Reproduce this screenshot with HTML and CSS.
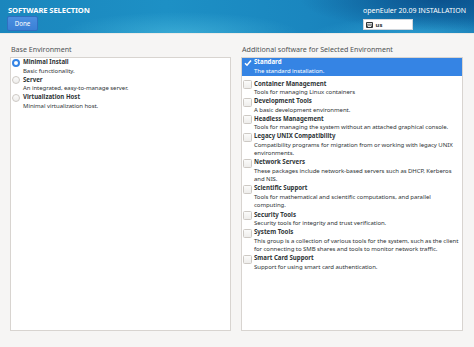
FILE: index.html
```html
<!DOCTYPE html>
<html>
<head>
<meta charset="utf-8">
<link rel="stylesheet" href="styles.css">
</head>
<body>
<header class="top">
  <div class="top-left">
    <div class="title">SOFTWARE SELECTION</div>
    <button class="done">Done</button>
  </div>
  <div class="top-right">
    <div class="product">openEuler 20.09 INSTALLATION</div>
    <div class="kbd">
      <svg class="kbd-icon" width="7" height="6" viewBox="0 0 7 6"><rect x="0" y="0" width="7" height="6" rx="1" fill="#2e3436"/><rect x="1" y="1.2" width="5" height="0.9" fill="#fff"/><rect x="1" y="2.6" width="5" height="0.9" fill="#fff"/><rect x="1.8" y="4" width="3.4" height="0.9" fill="#fff"/></svg>
      <span class="kbd-text">us</span>
    </div>
  </div>
</header>
<main class="main">
  <section class="col">
    <div class="label">Base Environment</div>
    <div class="box">
      <div class="row">
        <span class="radio on"></span>
        <div class="txt"><div class="t">Minimal Install</div><div class="d">Basic functionality.</div></div>
      </div>
      <div class="row">
        <span class="radio"></span>
        <div class="txt"><div class="t">Server</div><div class="d">An integrated, easy-to-manage server.</div></div>
      </div>
      <div class="row">
        <span class="radio"></span>
        <div class="txt"><div class="t">Virtualization Host</div><div class="d">Minimal virtualization host.</div></div>
      </div>
    </div>
  </section>
  <section class="col">
    <div class="label">Additional software for Selected Environment</div>
    <div class="box">
      <div class="row sel">
        <span class="check on"><svg width="8" height="8" viewBox="0 0 8 8"><path d="M1 4.2 L3 6.2 L7 1.6" fill="none" stroke="#fff" stroke-width="1.6"/></svg></span>
        <div class="txt"><div class="t">Standard</div><div class="d">The standard installation.</div></div>
      </div>
      <div class="row">
        <span class="check"></span>
        <div class="txt"><div class="t">Container Management</div><div class="d">Tools for managing Linux containers</div></div>
      </div>
      <div class="row">
        <span class="check"></span>
        <div class="txt"><div class="t">Development Tools</div><div class="d">A basic development environment.</div></div>
      </div>
      <div class="row">
        <span class="check"></span>
        <div class="txt"><div class="t">Headless Management</div><div class="d">Tools for managing the system without an attached graphical console.</div></div>
      </div>
      <div class="row">
        <span class="check"></span>
        <div class="txt"><div class="t">Legacy UNIX Compatibility</div><div class="d">Compatibility programs for migration from or working with legacy UNIX environments.</div></div>
      </div>
      <div class="row">
        <span class="check"></span>
        <div class="txt"><div class="t">Network Servers</div><div class="d">These packages include network-based servers such as DHCP, Kerberos and NIS.</div></div>
      </div>
      <div class="row">
        <span class="check"></span>
        <div class="txt"><div class="t">Scientific Support</div><div class="d">Tools for mathematical and scientific computations, and parallel computing.</div></div>
      </div>
      <div class="row">
        <span class="check"></span>
        <div class="txt"><div class="t">Security Tools</div><div class="d">Security tools for integrity and trust verification.</div></div>
      </div>
      <div class="row">
        <span class="check"></span>
        <div class="txt"><div class="t">System Tools</div><div class="d">This group is a collection of various tools for the system, such as the client for connecting to SMB shares and tools to monitor network traffic.</div></div>
      </div>
      <div class="row">
        <span class="check"></span>
        <div class="txt"><div class="t">Smart Card Support</div><div class="d">Support for using smart card authentication.</div></div>
      </div>
    </div>
  </section>
</main>
</body>
</html>
```
FILE: styles.css
```css
* { box-sizing: border-box; }
html, body { margin: 0; padding: 0; }
body {
  width: 474px;
  height: 347px;
  overflow: hidden;
  background: #f6f5f4;
  font-family: "Noto Sans", "Open Sans", sans-serif;
  color: #2e3436;
}
.top {
  height: 34px;
  display: flex;
  justify-content: space-between;
  padding: 5px 8px 0 7px;
  background:
    radial-gradient(ellipse 140px 30px at 440px 0px, rgba(8,70,130,0.75), rgba(8,70,130,0) 100%),
    radial-gradient(ellipse 120px 22px at 180px 34px, rgba(90,200,230,0.45), rgba(90,200,230,0) 100%),
    radial-gradient(ellipse 110px 20px at 420px 36px, rgba(60,180,225,0.6), rgba(60,180,225,0) 100%),
    linear-gradient(90deg, #1b86bd 0%, #1d90c5 35%, #1a86bf 65%, #1372ad 100%);
  border-bottom: 1px solid #eceae6;
}
.top-left { display: flex; flex-direction: column; align-items: flex-start; }
.title {
  color: #fff;
  font-weight: 700;
  font-size: 7.6px;
  line-height: 10px;
  padding-left: 1px;
  letter-spacing: -0.1px;
}
.done {
  margin-top: 1px;
  width: 31px;
  height: 15px;
  padding: 0;
  border: 1px solid #2f6fc0;
  border-radius: 2px;
  background: linear-gradient(#4a8fe0, #3b80d6);
  color: #fff;
  font-family: inherit;
  font-size: 6.2px;
}
.top-right { display: flex; flex-direction: column; align-items: flex-start; padding-top: 1px; }
.product {
  color: #fff;
  font-size: 7px;
  line-height: 10px;
}
.kbd {
  margin-top: 3px;
  width: 50px;
  height: 11px;
  background: #fff;
  border: 1px solid #cfd6dc;
  display: flex;
  align-items: center;
  padding-left: 1.5px;
  gap: 3px;
}
.kbd-text { font-size: 6px; font-weight: 700; color: #2e3436; }
.main {
  display: grid;
  grid-template-columns: 221px 222px;
  column-gap: 10px;
  padding: 0 11px 0 10px;
  height: 296px;
}
.col { display: flex; flex-direction: column; }
.label {
  height: 23px;
  padding-top: 10px;
  padding-left: 1px;
  font-size: 7.1px;
  line-height: 10px;
  color: #4f5355;
}
.box {
  background: #fff;
  border: 1px solid #d8d4d0;
  height: 274px;
  padding: 0;
}
.row {
  display: flex;
  align-items: flex-start;
  padding: 0 3px 0 1px;
  margin-bottom: 0.6px;
}
.row.sel {
  background: #3584e4;
  color: #fff;
  margin-bottom: 4px;
  padding-bottom: 0.5px;
}
.txt { flex: 1; }
.t {
  font-weight: 700;
  font-size: 6.1px;
  line-height: 8.5px;
}
.d {
  font-size: 6px;
  line-height: 8.5px;
  letter-spacing: -0.05px;
}
.radio {
  flex: none;
  width: 8px;
  height: 8px;
  margin: 0.5px 3px 0 0;
  border-radius: 50%;
  border: 1px solid #cdc9c4;
  background: linear-gradient(#fbfbfa, #eeedeb);
}
.radio.on {
  border: 2px solid #3584e4;
  background: #fff;
}
.check {
  flex: none;
  width: 9px;
  height: 9px;
  margin: 0.5px 2px 0 0;
  border: 1px solid #cdc9c4;
  border-radius: 1.5px;
  background: linear-gradient(#fbfbfa, #eeedeb);
  display: flex;
  align-items: center;
  justify-content: center;
}
.check.on { border: none; background: none; }
.check svg { display: block; }
```
